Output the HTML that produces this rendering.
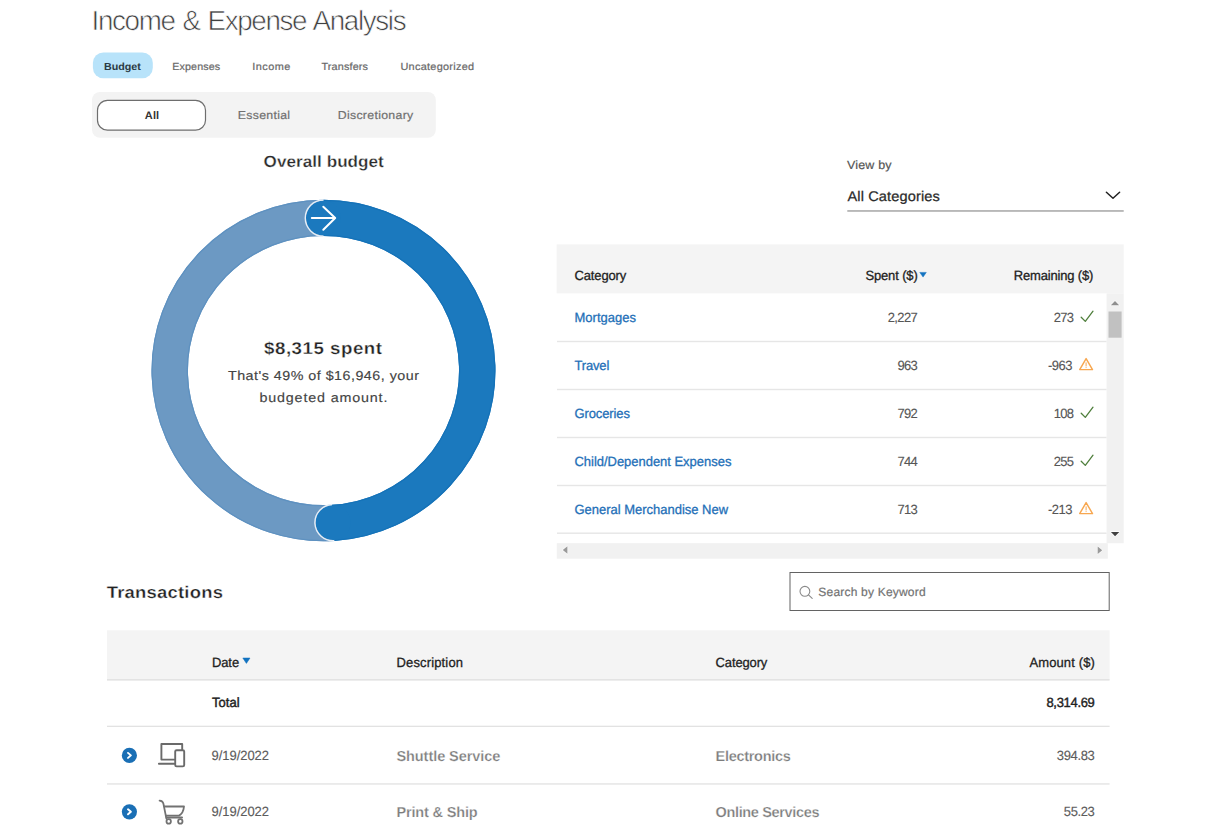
<!DOCTYPE html>
<html><head><meta charset="utf-8"><title>Income &amp; Expense Analysis</title>
<style>
html,body{margin:0;padding:0;background:#fff;}
body{width:1218px;height:838px;position:relative;overflow:hidden;font-family:"Liberation Sans",sans-serif;}
svg{position:absolute;overflow:visible;}
</style></head><body>
<svg style="left:0;top:0;" width="1218" height="838" viewBox="0 0 1218 838">
  <!-- tab pill -->
  <rect x="92.9" y="52.4" width="59.9" height="25.9" rx="10.5" fill="#b8e3fa"/>
  <!-- segmented control -->
  <rect x="92" y="92" width="343.8" height="45.8" rx="8" fill="#f3f3f3"/>
  <rect x="97.5" y="100.3" width="108" height="29.9" rx="10" fill="#fff" stroke="#6e6e6e" stroke-width="1.2"/>

  <!-- donut -->
  <g transform="translate(323.5 370.5) scale(1.007 1)" fill="none">
    <path d="M9.59 152.40 A152.7 152.7 0 1 1 0 -152.7" stroke="#6c99c3" stroke-width="36.2"/>
    <path d="M10.69 169.86 A170.20 170.20 0 1 1 0 -170.20" stroke="#5e91c0" stroke-width="1.2"/>
    <path d="M8.49 134.93 A135.20 135.20 0 1 1 0 -135.20" stroke="#5e91c0" stroke-width="1.2"/>
    <path d="M0 -152.7 A152.7 152.7 0 0 1 9.59 152.40" stroke="#1b79be" stroke-width="36.2"/>
    <path d="M0 -170.20 A170.20 170.20 0 0 1 10.69 169.86" stroke="#1572b8" stroke-width="1.2"/>
    <path d="M0 -135.20 A135.20 135.20 0 0 1 8.49 134.93" stroke="#1572b8" stroke-width="1.2"/>
    <circle cx="0" cy="-152.4" r="17.4" fill="#1b79be"/>
    <circle cx="9.57" cy="152.10" r="17.4" fill="#1b79be"/>
    <path d="M0 -170.50 A18.099999999999998 18.099999999999998 0 0 0 0 -134.30" stroke="#e6eef6" stroke-width="1.4"/>
    <path d="M10.71 170.16 A18.099999999999998 18.099999999999998 0 0 1 8.43 134.03" stroke="#e6eef6" stroke-width="1.4"/>
  </g>
  <path d="M311.8 218 H335 M323.3 206.7 L335.2 218 L323.3 229.8" fill="none" stroke="#fff" stroke-width="2" stroke-linecap="round" stroke-linejoin="round"/>

  <!-- view by -->
  <rect x="847.3" y="210" width="276.4" height="1.9" fill="#b8b8b8"/>
  <path d="M1106.4 192.2 L1113 198.3 L1119.6 192.2" fill="none" stroke="#222" stroke-width="1.5" stroke-linecap="round" stroke-linejoin="round"/>

  <!-- category table -->
  <rect x="556.6" y="244.4" width="567.1" height="49" fill="#f4f4f4"/>
  <path d="M919.8 272.4 H926.3 L923.05 277.1 Z" fill="#1273c0" stroke="#1273c0" stroke-width="0.5" stroke-linejoin="round"/>
  <g fill="#e6e6e6">
    <rect x="557" y="340.8" width="549.6" height="1.4"/>
    <rect x="557" y="388.8" width="549.6" height="1.4"/>
    <rect x="557" y="436.8" width="549.6" height="1.4"/>
    <rect x="557" y="484.8" width="549.6" height="1.4"/>
    <rect x="557" y="532.5" width="549.6" height="1.4"/>
  </g>
  <!-- vertical scrollbar -->
  <rect x="1106.6" y="293.4" width="17.1" height="249.8" fill="#f1f1f1"/>
  <rect x="1108.5" y="311.5" width="13.1" height="26.2" fill="#c1c1c1"/>
  <path d="M1110.9 305.3 L1115 300.9 L1119.1 305.3 Z" fill="#8f8f8f" stroke="#fff" stroke-opacity="0.55" stroke-width="1.4" stroke-linejoin="round" paint-order="stroke"/>
  <path d="M1110.9 531.9 L1115.1 536.2 L1119.3 531.9 Z" fill="#404040" stroke="#fff" stroke-opacity="0.75" stroke-width="1.6" stroke-linejoin="round" paint-order="stroke"/>
  <!-- horizontal scrollbar -->
  <rect x="556.8" y="543.2" width="551" height="15.5" fill="#f1f1f1"/>
  <path d="M567.4 546.2 L562.8 550 L567.4 553.8 Z" fill="#9a9a9a" stroke="#fff" stroke-opacity="0.6" stroke-width="1.6" stroke-linejoin="round" paint-order="stroke"/>
  <path d="M1097.7 546.4 L1102.2 550.2 L1097.7 554 Z" fill="#9a9a9a" stroke="#fff" stroke-opacity="0.5" stroke-width="1.4" stroke-linejoin="round" paint-order="stroke"/>

  <!-- status icons -->
  <g fill="none" stroke="#4f7f3c" stroke-width="1.3" stroke-linecap="round" stroke-linejoin="round">
    <path d="M1081.2 317.2 L1085.3 321.4 L1093 311.2"/>
    <path d="M1081.2 413.2 L1085.3 417.4 L1093 407.2"/>
    <path d="M1081.2 461.2 L1085.3 465.4 L1093 455.2"/>
  </g>
  <g fill="none" stroke="#f7a750" stroke-width="1.45" stroke-linejoin="round" stroke-linecap="round">
    <path d="M1086.1 358.6 L1092.5 369.6 H1079.7 Z"/>
    <path d="M1086.1 362.8 V366" stroke-width="1"/><path d="M1086.1 367.6 V367.7" stroke-width="1"/>
    <path d="M1086.1 502.6 L1092.5 513.6 H1079.7 Z"/>
    <path d="M1086.1 506.8 V510" stroke-width="1"/><path d="M1086.1 511.6 V511.7" stroke-width="1"/>
  </g>

  <!-- search -->
  <rect x="790" y="572.5" width="319.2" height="38" fill="#fff" stroke="#636363" stroke-width="1"/>
  <circle cx="804.9" cy="591.3" r="4.9" fill="none" stroke="#8a8a8a" stroke-width="1.1"/>
  <path d="M808.5 594.9 L812.2 598.4" stroke="#8a8a8a" stroke-width="1.1" stroke-linecap="round"/>

  <!-- transactions table -->
  <rect x="107" y="630.3" width="1002.6" height="48.9" fill="#f4f4f4"/>
  <rect x="107" y="679.2" width="1002.6" height="1.3" fill="#dcdcdc"/>
  <path d="M242.8 658 H250 L246.4 663.4 Z" fill="#1273c0" stroke="#1273c0" stroke-width="0.5" stroke-linejoin="round"/>
  <rect x="107" y="725.7" width="1002.6" height="1.3" fill="#e2e2e2"/>
  <rect x="107" y="783.3" width="1002.6" height="1.3" fill="#e2e2e2"/>

  <circle cx="129.4" cy="755.4" r="7.6" fill="#1a6fb5"/>
  <path d="M128 752.9 L130.9 755.4 L128 757.9" fill="none" stroke="#fff" stroke-width="1.9" stroke-linecap="round" stroke-linejoin="round"/>
  <circle cx="129.4" cy="811.8" r="7.6" fill="#1a6fb5"/>
  <path d="M128 809.3 L130.9 811.8 L128 814.3" fill="none" stroke="#fff" stroke-width="1.9" stroke-linecap="round" stroke-linejoin="round"/>
  <!-- devices icon -->
  <g fill="none" stroke="#6a6a6a" stroke-width="1.9" stroke-linejoin="round" stroke-linecap="round">
    <path d="M174.4 759.6 H161.4 V744 H182.2 V749.6"/>
    <path d="M158.9 763.7 H174.2"/>
    <rect x="175.2" y="750.2" width="9" height="16.2" rx="1.4"/>
  </g>
  <!-- cart icon -->
  <g fill="none" stroke="#727272" stroke-width="1.8" stroke-linejoin="round" stroke-linecap="round">
    <path d="M159.6 800.6 C162 800.8 162.9 801.6 163.4 803.6 L166.4 818.6"/>
    <path d="M164.4 806.5 H184 C183.6 811 182 814 179 815.6 H166"/>
    <path d="M166.6 817.6 H182" stroke-width="2"/>
    <circle cx="168.7" cy="821.4" r="2.2"/>
    <circle cx="180.3" cy="821.4" r="2.2"/>
  </g>
</svg>

<svg style="left:0;top:0;" width="1218" height="838" viewBox="0 0 1218 838" font-family="Liberation Sans, sans-serif" text-rendering="geometricPrecision" lengthAdjust="spacing">
<text transform="translate(91.59 29.90)" font-size="27.8" fill="#404040" textLength="315.00" word-spacing="1.5" stroke="#fff" stroke-width="0.65">Income &amp; Expense Analysis</text>
<text transform="translate(103.97 70.10) scale(1.04 1)" font-size="10.3" fill="#2b3a44" textLength="35.38" font-weight="700">Budget</text>
<text transform="translate(172.37 70.10) scale(1.04 1)" font-size="10.3" fill="#686868" textLength="45.87" stroke="#686868" stroke-width="0.2">Expenses</text>
<text transform="translate(252.26 70.10) scale(1.06 1)" font-size="10.3" fill="#686868" textLength="35.85" stroke="#686868" stroke-width="0.2">Income</text>
<text transform="translate(321.47 70.10) scale(1.05 1)" font-size="10.3" fill="#686868" textLength="44.29" stroke="#686868" stroke-width="0.2">Transfers</text>
<text transform="translate(400.46 70.10) scale(1.06 1)" font-size="10.3" fill="#686868" textLength="69.43" stroke="#686868" stroke-width="0.2">Uncategorized</text>
<text transform="translate(152.00 119.30)" font-size="11" fill="#333" textLength="14.30" text-anchor="middle" font-weight="700">All</text>
<text transform="translate(237.71 119.00) scale(1.07 1)" font-size="11.5" fill="#707070" textLength="48.97" stroke="#707070" stroke-width="0.2">Essential</text>
<text transform="translate(337.71 119.00) scale(1.07 1)" font-size="11.5" fill="#707070" textLength="70.56" stroke="#707070" stroke-width="0.2">Discretionary</text>
<text transform="translate(263.62 167.10) scale(1.05 1)" font-size="16.3" fill="#2a2a2a" textLength="114.48" font-weight="700" stroke="#fff" stroke-width="0.3">Overall budget</text>
<text transform="translate(264.05 353.50) scale(1.1 1)" font-size="17" fill="#222" textLength="107.27" font-weight="700" stroke="#fff" stroke-width="0.3">$8,315 spent</text>
<text transform="translate(227.93 379.60) scale(1.1 1)" font-size="13" fill="#444" textLength="173.64" stroke="#444" stroke-width="0.15">That&#x27;s 49% of $16,946, your</text>
<text transform="translate(259.43 402.20) scale(1.1 1)" font-size="13" fill="#444" textLength="116.36" stroke="#444" stroke-width="0.15">budgeted amount.</text>
<text transform="translate(847.10 169.30) scale(1.04 1)" font-size="12" fill="#555" textLength="42.69" stroke="#555" stroke-width="0.2">View by</text>
<text transform="translate(847.42 200.80) scale(1.04 1)" font-size="14" fill="#2a2a2a" textLength="88.85" stroke="#2a2a2a" stroke-width="0.25">All Categories</text>
<text transform="translate(574.48 280.40) scale(0.97 1)" font-size="13.4" fill="#222" textLength="53.40" stroke="#222" stroke-width="0.3">Category</text>
<text transform="translate(865.38 280.40) scale(0.97 1)" font-size="13.4" fill="#222" textLength="54.02" stroke="#222" stroke-width="0.3">Spent ($)</text>
<text transform="translate(1013.78 280.40) scale(0.97 1)" font-size="13.4" fill="#222" textLength="82.06" stroke="#222" stroke-width="0.3">Remaining ($)</text>
<text transform="translate(574.48 321.50) scale(0.97 1)" font-size="13.4" fill="#2470b8" textLength="63.51" stroke="#2470b8" stroke-width="0.3">Mortgages</text>
<text transform="translate(917.72 321.50) scale(0.97 1)" font-size="13.4" fill="#565656" textLength="30.93" text-anchor="end" stroke="#565656" stroke-width="0.15">2,227</text>
<text transform="translate(1074.02 321.50) scale(0.97 1)" font-size="13.4" fill="#565656" textLength="20.82" text-anchor="end" stroke="#565656" stroke-width="0.15">273</text>
<text transform="translate(574.48 369.50) scale(0.97 1)" font-size="13.4" fill="#2470b8" textLength="35.88" stroke="#2470b8" stroke-width="0.3">Travel</text>
<text transform="translate(917.72 369.50) scale(0.97 1)" font-size="13.4" fill="#565656" textLength="20.82" text-anchor="end" stroke="#565656" stroke-width="0.15">963</text>
<text transform="translate(1072.42 369.50) scale(0.97 1)" font-size="13.4" fill="#565656" textLength="25.26" text-anchor="end" stroke="#565656" stroke-width="0.15">-963</text>
<text transform="translate(574.48 417.50) scale(0.97 1)" font-size="13.4" fill="#2470b8" textLength="57.22" stroke="#2470b8" stroke-width="0.3">Groceries</text>
<text transform="translate(917.72 417.50) scale(0.97 1)" font-size="13.4" fill="#565656" textLength="20.82" text-anchor="end" stroke="#565656" stroke-width="0.15">792</text>
<text transform="translate(1074.02 417.50) scale(0.97 1)" font-size="13.4" fill="#565656" textLength="20.82" text-anchor="end" stroke="#565656" stroke-width="0.15">108</text>
<text transform="translate(574.48 465.50) scale(0.97 1)" font-size="13.4" fill="#2470b8" textLength="161.75" stroke="#2470b8" stroke-width="0.3">Child/Dependent Expenses</text>
<text transform="translate(917.72 465.50) scale(0.97 1)" font-size="13.4" fill="#565656" textLength="20.82" text-anchor="end" stroke="#565656" stroke-width="0.15">744</text>
<text transform="translate(1074.02 465.50) scale(0.97 1)" font-size="13.4" fill="#565656" textLength="20.82" text-anchor="end" stroke="#565656" stroke-width="0.15">255</text>
<text transform="translate(574.48 513.50) scale(0.97 1)" font-size="13.4" fill="#2470b8" textLength="158.35" stroke="#2470b8" stroke-width="0.3">General Merchandise New</text>
<text transform="translate(917.72 513.50) scale(0.97 1)" font-size="13.4" fill="#565656" textLength="20.82" text-anchor="end" stroke="#565656" stroke-width="0.15">713</text>
<text transform="translate(1072.42 513.50) scale(0.97 1)" font-size="13.4" fill="#565656" textLength="25.26" text-anchor="end" stroke="#565656" stroke-width="0.15">-213</text>
<text transform="translate(106.76 598.30) scale(1.1 1)" font-size="16.8" fill="#222" textLength="105.64" font-weight="700" stroke="#fff" stroke-width="0.3">Transactions</text>
<text transform="translate(818.32 595.90)" font-size="12" fill="#727272" textLength="107.30" stroke="#727272" stroke-width="0.2">Search by Keyword</text>
<text transform="translate(211.88 666.50) scale(0.97 1)" font-size="13.4" fill="#222" textLength="28.14" stroke="#222" stroke-width="0.3">Date</text>
<text transform="translate(396.48 666.50) scale(0.97 1)" font-size="13.4" fill="#222" textLength="68.56" stroke="#222" stroke-width="0.3">Description</text>
<text transform="translate(715.58 666.50) scale(0.97 1)" font-size="13.4" fill="#222" textLength="53.40" stroke="#222" stroke-width="0.3">Category</text>
<text transform="translate(1094.82 666.50) scale(0.97 1)" font-size="13.4" fill="#222" textLength="67.42" text-anchor="end" stroke="#222" stroke-width="0.3">Amount ($)</text>
<text transform="translate(211.88 707.10) scale(0.97 1)" font-size="13.4" fill="#222" textLength="28.66" stroke="#222" stroke-width="0.45">Total</text>
<text transform="translate(1094.82 707.10) scale(0.97 1)" font-size="13.4" fill="#222" textLength="49.90" text-anchor="end" stroke="#222" stroke-width="0.4">8,314.69</text>
<text transform="translate(211.58 759.50) scale(0.97 1)" font-size="13.4" fill="#5c5c5c" textLength="59.18" stroke="#5c5c5c" stroke-width="0.15">9/19/2022</text>
<text transform="translate(396.42 760.60)" font-size="14.5" fill="#7c7c7c" textLength="104.00" font-weight="700" stroke="#fff" stroke-width="0.25">Shuttle Service</text>
<text transform="translate(715.52 760.60)" font-size="14.5" fill="#7c7c7c" textLength="75.30" font-weight="700" stroke="#fff" stroke-width="0.25">Electronics</text>
<text transform="translate(1094.82 759.50) scale(0.97 1)" font-size="13.4" fill="#5c5c5c" textLength="39.18" text-anchor="end" stroke="#5c5c5c" stroke-width="0.15">394.83</text>
<text transform="translate(211.58 816.20) scale(0.97 1)" font-size="13.4" fill="#5c5c5c" textLength="59.18" stroke="#5c5c5c" stroke-width="0.15">9/19/2022</text>
<text transform="translate(396.42 817.30)" font-size="14.5" fill="#7c7c7c" textLength="81.20" font-weight="700" stroke="#fff" stroke-width="0.25">Print &amp; Ship</text>
<text transform="translate(715.52 817.30)" font-size="14.5" fill="#7c7c7c" textLength="104.00" font-weight="700" stroke="#fff" stroke-width="0.25">Online Services</text>
<text transform="translate(1094.82 816.20) scale(0.97 1)" font-size="13.4" fill="#5c5c5c" textLength="31.96" text-anchor="end" stroke="#5c5c5c" stroke-width="0.15">55.23</text>
</svg>
</body></html>
